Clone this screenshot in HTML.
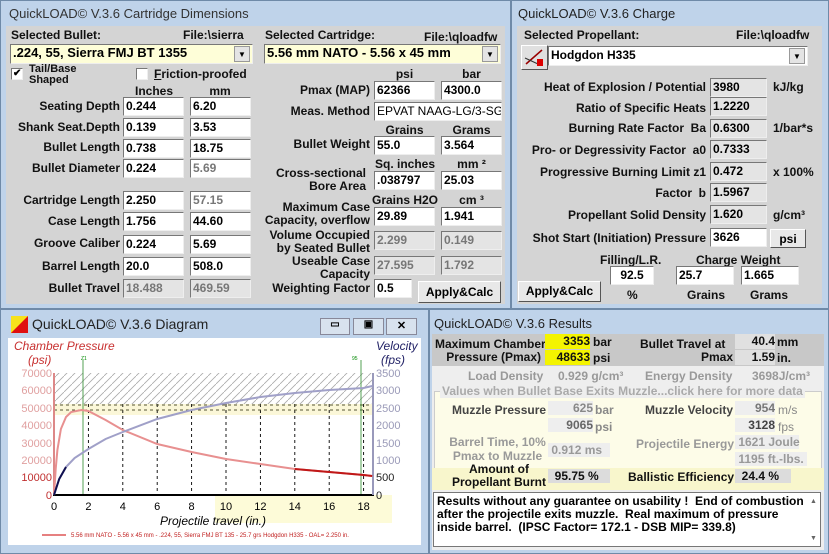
<!DOCTYPE html>
<html><head><meta charset="utf-8">
<style>
*{margin:0;padding:0;box-sizing:border-box}
body{width:829px;height:554px;background:#8a8a8a;position:relative;overflow:hidden;font-family:"Liberation Sans",Arial,sans-serif}
.w{position:absolute;background:#bfd3ea;border:1px solid #6f8aa8}
.tt{position:absolute;font:13px "Liberation Sans",sans-serif;color:#222}
.b{position:absolute;background:#d4d4d4}
.t{position:absolute;font:bold 12px "Liberation Sans",sans-serif;color:#111;white-space:nowrap;line-height:14px}
.r{text-align:right}
.c{text-align:center}
.i{position:absolute;background:#fff;border:1px solid #777;border-right-color:#eee;border-bottom-color:#eee;font:bold 12px "Liberation Sans",sans-serif;padding:1px 2px;line-height:14px;white-space:nowrap;overflow:hidden}
.g{background:#e4e4e4}
.gt{color:#777}
.btn{position:absolute;background:#e8e8e8;border:1px solid #fff;border-right-color:#555;border-bottom-color:#555;font:bold 12px "Liberation Sans",sans-serif;text-align:center}
.dd{position:absolute;width:16px;height:16px;background:#e4e4e4;border:1px solid #999;font-size:8px;text-align:center;line-height:15px}
</style></head><body>

<!-- Window 1 -->
<div class="w" style="left:0;top:0;width:511px;height:309px"></div>
<div class="tt" style="left:9px;top:6px;color:#333">QuickLOAD© V.3.6 Cartridge Dimensions</div>
<div class="b" style="left:6px;top:26px;width:499px;height:278px"></div>
<div class="t" style="left:11px;top:28px">Selected Bullet:</div>
<div class="t" style="left:183px;top:28px">File:\sierra</div>
<div class="i" style="left:10px;top:44px;width:243px;height:20px;background:#fefed8;font-size:13px">.224, 55, Sierra FMJ BT 1355</div>
<div class="dd" style="left:234px;top:46px">▼</div>
<div class="t" style="left:265px;top:28px">Selected Cartridge:</div>
<div class="t" style="left:424px;top:30px">File:\qloadfw</div>
<div class="i" style="left:264px;top:44px;width:237px;height:20px;background:#fefed8;font-size:13px">5.56 mm NATO - 5.56 x 45 mm</div>
<div class="dd" style="left:482px;top:46px">▼</div>
<div class="i" style="left:11px;top:68px;width:12px;height:12px;font-size:10px;line-height:9px;padding:0 1px">✔</div>
<div class="t" style="left:29px;top:64px;font-size:11px;line-height:11px;height:22px;overflow:hidden">Tail/Base<br>Shaped</div>
<div class="i" style="left:136px;top:68px;width:12px;height:12px"></div>
<div class="t" style="left:154px;top:67px"><u>F</u>riction-proofed</div>
<div class="t c" style="left:124px;top:84px;width:60px">Inches</div>
<div class="t c" style="left:190px;top:84px;width:60px">mm</div>

<div class="t r" style="left:0;top:99px;width:120px">Seating Depth</div>
<div class="i" style="left:123px;top:97px;width:61px;height:19px">0.244</div>
<div class="i" style="left:190px;top:97px;width:61px;height:19px">6.20</div>
<div class="t r" style="left:0;top:120px;width:120px">Shank Seat.Depth</div>
<div class="i" style="left:123px;top:118px;width:61px;height:19px">0.139</div>
<div class="i" style="left:190px;top:118px;width:61px;height:19px">3.53</div>
<div class="t r" style="left:0;top:140px;width:120px">Bullet Length</div>
<div class="i" style="left:123px;top:139px;width:61px;height:19px">0.738</div>
<div class="i" style="left:190px;top:139px;width:61px;height:19px">18.75</div>
<div class="t r" style="left:0;top:161px;width:120px">Bullet Diameter</div>
<div class="i" style="left:123px;top:159px;width:61px;height:19px">0.224</div>
<div class="i gt" style="left:190px;top:159px;width:61px;height:19px">5.69</div>
<div class="t r" style="left:0;top:193px;width:120px">Cartridge Length</div>
<div class="i" style="left:123px;top:191px;width:61px;height:19px">2.250</div>
<div class="i gt" style="left:190px;top:191px;width:61px;height:19px">57.15</div>
<div class="t r" style="left:0;top:214px;width:120px">Case Length</div>
<div class="i" style="left:123px;top:212px;width:61px;height:19px">1.756</div>
<div class="i" style="left:190px;top:212px;width:61px;height:19px">44.60</div>
<div class="t r" style="left:0;top:236px;width:120px">Groove Caliber</div>
<div class="i" style="left:123px;top:235px;width:61px;height:19px">0.224</div>
<div class="i" style="left:190px;top:235px;width:61px;height:19px">5.69</div>
<div class="t r" style="left:0;top:259px;width:120px">Barrel Length</div>
<div class="i" style="left:123px;top:257px;width:61px;height:19px">20.0</div>
<div class="i" style="left:190px;top:257px;width:61px;height:19px">508.0</div>
<div class="t r" style="left:0;top:281px;width:120px">Bullet Travel</div>
<div class="i g gt" style="left:123px;top:279px;width:61px;height:19px">18.488</div>
<div class="i g gt" style="left:190px;top:279px;width:61px;height:19px">469.59</div>

<div class="t c" style="left:374px;top:67px;width:61px">psi</div>
<div class="t c" style="left:441px;top:67px;width:61px">bar</div>
<div class="t r" style="left:250px;top:83px;width:120px">Pmax (MAP)</div>
<div class="i" style="left:374px;top:81px;width:61px;height:19px">62366</div>
<div class="i" style="left:441px;top:81px;width:61px;height:19px">4300.0</div>
<div class="t r" style="left:250px;top:104px;width:120px">Meas. Method</div>
<div class="i" style="left:374px;top:102px;width:128px;height:19px;font-weight:normal">EPVAT NAAG-LG/3-SG/1</div>
<div class="t c" style="left:374px;top:123px;width:61px">Grains</div>
<div class="t c" style="left:441px;top:123px;width:61px">Grams</div>
<div class="t r" style="left:250px;top:137px;width:120px">Bullet Weight</div>
<div class="i" style="left:374px;top:136px;width:61px;height:19px">55.0</div>
<div class="i" style="left:441px;top:136px;width:61px;height:19px">3.564</div>
<div class="t c" style="left:370px;top:157px;width:70px">Sq. inches</div>
<div class="t c" style="left:441px;top:157px;width:61px">mm ²</div>
<div class="t r" style="left:250px;top:167px;width:116px;line-height:13px">Cross-sectional<br>Bore Area</div>
<div class="i" style="left:374px;top:171px;width:61px;height:19px">.038797</div>
<div class="i" style="left:441px;top:171px;width:61px;height:19px">25.03</div>
<div class="t c" style="left:370px;top:193px;width:70px">Grains H2O</div>
<div class="t c" style="left:441px;top:193px;width:61px">cm ³</div>
<div class="t r" style="left:250px;top:201px;width:120px;line-height:13px">Maximum Case<br>Capacity, overflow</div>
<div class="i" style="left:374px;top:207px;width:61px;height:19px">29.89</div>
<div class="i" style="left:441px;top:207px;width:61px;height:19px">1.941</div>
<div class="t r" style="left:250px;top:229px;width:120px;line-height:13px">Volume Occupied<br>by Seated Bullet</div>
<div class="i g gt" style="left:374px;top:231px;width:61px;height:19px">2.299</div>
<div class="i g gt" style="left:441px;top:231px;width:61px;height:19px">0.149</div>
<div class="t r" style="left:250px;top:255px;width:120px;line-height:13px">Useable Case<br>Capacity</div>
<div class="i g gt" style="left:374px;top:256px;width:61px;height:19px">27.595</div>
<div class="i g gt" style="left:441px;top:256px;width:61px;height:19px">1.792</div>
<div class="t r" style="left:250px;top:281px;width:120px">Weighting Factor</div>
<div class="i" style="left:374px;top:279px;width:38px;height:19px">0.5</div>
<div class="btn" style="left:418px;top:281px;width:83px;height:22px;line-height:20px">Apply&amp;Calc</div>

<!-- Window 2 -->
<div class="w" style="left:511px;top:0;width:318px;height:309px"></div>
<div class="tt" style="left:518px;top:6px">QuickLOAD© V.3.6 Charge</div>
<div class="b" style="left:517px;top:26px;width:305px;height:278px"></div>
<div class="t" style="left:524px;top:28px">Selected Propellant:</div>
<div class="t" style="left:736px;top:28px">File:\qloadfw</div>
<div class="btn" style="left:521px;top:45px;width:27px;height:25px;background:#e0e0e0"><svg width="25" height="23"><path d="M4 18 L20 4" stroke="#900" stroke-width="1.5"/><path d="M3 12 L16 18" stroke="#333"/><rect x="15" y="13" width="6" height="7" fill="#d00"/></svg></div>
<div class="i" style="left:548px;top:46px;width:260px;height:20px">Hodgdon H335</div>
<div class="dd" style="left:789px;top:48px">▼</div>
<div class="t r" style="left:520px;top:80px;width:186px">Heat of Explosion / Potential</div>
<div class="i g" style="left:710px;top:78px;width:57px;height:19px">3980</div>
<div class="t" style="left:773px;top:80px">kJ/kg</div>
<div class="t r" style="left:520px;top:101px;width:186px">Ratio of Specific Heats</div>
<div class="i g" style="left:710px;top:97px;width:57px;height:19px">1.2220</div>
<div class="t r" style="left:520px;top:121px;width:186px">Burning Rate Factor&nbsp; Ba</div>
<div class="i g" style="left:710px;top:119px;width:57px;height:19px">0.6300</div>
<div class="t" style="left:773px;top:121px">1/bar*s</div>
<div class="t r" style="left:520px;top:143px;width:186px">Pro- or Degressivity Factor&nbsp; a0</div>
<div class="i g" style="left:710px;top:140px;width:57px;height:19px">0.7333</div>
<div class="t r" style="left:520px;top:165px;width:186px">Progressive Burning Limit z1</div>
<div class="i g" style="left:710px;top:162px;width:57px;height:19px">0.472</div>
<div class="t" style="left:773px;top:165px">x 100%</div>
<div class="t r" style="left:520px;top:186px;width:186px">Factor&nbsp; b</div>
<div class="i g" style="left:710px;top:183px;width:57px;height:19px">1.5967</div>
<div class="t r" style="left:520px;top:208px;width:186px">Propellant Solid Density</div>
<div class="i g" style="left:710px;top:205px;width:57px;height:19px">1.620</div>
<div class="t" style="left:773px;top:208px">g/cm³</div>
<div class="t r" style="left:520px;top:231px;width:186px">Shot Start (Initiation) Pressure</div>
<div class="i" style="left:710px;top:228px;width:57px;height:19px">3626</div>
<div class="btn" style="left:770px;top:229px;width:36px;height:19px;line-height:18px">psi</div>
<div class="t" style="left:600px;top:253px">Filling/L.R.</div>
<div class="t" style="left:696px;top:253px">Charge Weight</div>
<div class="i c" style="left:610px;top:266px;width:44px;height:19px">92.5</div>
<div class="i" style="left:676px;top:266px;width:58px;height:19px">25.7</div>
<div class="i" style="left:741px;top:266px;width:58px;height:19px">1.665</div>
<div class="btn" style="left:518px;top:281px;width:83px;height:21px;line-height:19px">Apply&amp;Calc</div>
<div class="t" style="left:627px;top:288px">%</div>
<div class="t" style="left:687px;top:288px">Grains</div>
<div class="t" style="left:750px;top:288px">Grams</div>

<!-- Window 3 Diagram -->
<div class="w" style="left:0;top:309px;width:429px;height:245px"></div>
<svg style="position:absolute;left:11px;top:316px" width="17" height="17"><rect width="17" height="17" fill="#f7e21c"/><polygon points="0,17 17,0 17,17" fill="#e01010"/></svg>
<div class="tt" style="left:32px;top:316px;font-size:14px">QuickLOAD© V.3.6 Diagram</div>
<div class="btn" style="left:320px;top:318px;width:30px;height:17px;background:#d8e2ee;border-color:#889;font-size:10px">▭</div>
<div class="btn" style="left:353px;top:318px;width:31px;height:17px;background:#d8e2ee;border-color:#889;font-size:10px">▣</div>
<div class="btn" style="left:386px;top:318px;width:31px;height:17px;background:#d8e2ee;border-color:#889;font-size:11px">✕</div>
<svg style="position:absolute;left:8px;top:338px" width="413" height="207">
<g transform="translate(-8,-338)" font-family="Liberation Sans,sans-serif">
<rect x="8" y="338" width="413" height="207" fill="#fff"/>
<rect x="215" y="495" width="177" height="28" fill="#fdfbd8"/>
<rect x="54" y="404" width="319" height="11" fill="#fbf7d8"/>
<defs><pattern id="h" width="8" height="8" patternUnits="userSpaceOnUse"><path d="M0 8 L8 0" stroke="#aaa" stroke-width="0.8"/></pattern></defs>
<rect x="54" y="373" width="319" height="31" fill="url(#h)"/>
<g stroke="#000" stroke-dasharray="3,3" stroke-width="0.9">
<path d="M88.4 404V495M122.8 404V495M157.2 404V495M191.6 404V495M226 404V495M260.4 404V495M294.8 404V495M329.2 404V495M363.6 404V495"/>
<path d="M54 405H373M54 410H373" stroke="#553"/>
</g>
<path d="M83 360V495M361 360V495" stroke="#2a8a2a" stroke-width="0.8"/>
<path d="M54 373V495H373V373" stroke="#000" stroke-width="2" fill="none"/>
<path d="M54 373V495" stroke="#d88" stroke-width="2"/>
<path d="M373 373V495" stroke="#99b" stroke-width="2"/>
<polyline fill="none" stroke="#e89090" stroke-width="2" points="54,495 55.7,469 57.4,450 60.9,429 66,417 71.2,412 81.3,410 88.4,411 105.6,420 122.8,430 157.2,444 191.6,452 226,459 260.4,464 294.8,469 329.2,472 363.6,475 372.2,476"/>
<polyline fill="none" stroke="#c01818" stroke-width="2" points="294.8,469 329.2,472 363.6,475 372.2,476"/>
<polyline fill="none" stroke="#a0a0c8" stroke-width="2" points="54,495 59.2,479 66,467 74.6,458 88.4,449 105.6,439 122.8,432 157.2,419 191.6,410 226,403 260.4,397 294.8,393 329.2,390 363.6,388 372.2,386"/>
<polyline fill="none" stroke="#101050" stroke-width="2" points="54,495 59.2,479 66,467"/>
<text x="14" y="350" font-size="12" font-style="italic" fill="#c83030">Chamber Pressure</text>
<text x="28" y="364" font-size="12" font-style="italic" fill="#c83030">(psi)</text>
<text x="376" y="350" font-size="12" font-style="italic" fill="#222266">Velocity</text>
<text x="381" y="364" font-size="12" font-style="italic" fill="#222266">(fps)</text>
<text x="81" y="360" font-size="5" fill="#080">Z1</text><text x="352" y="360" font-size="5" fill="#080">95</text>
<g font-size="11" fill="#e0a0a0" text-anchor="end">
<text x="52" y="377">70000</text><text x="52" y="394">60000</text><text x="52" y="412">50000</text><text x="52" y="429">40000</text><text x="52" y="447">30000</text><text x="52" y="464">20000</text><text x="52" y="481" fill="#c03030">10000</text><text x="52" y="499" fill="#c03030">0</text></g>
<g font-size="11" fill="#9a9ab8"><text x="376" y="377">3500</text><text x="376" y="394">3000</text><text x="376" y="412">2500</text><text x="376" y="429">2000</text><text x="376" y="447">1500</text><text x="376" y="464">1000</text><text x="376" y="481" fill="#222">500</text><text x="376" y="499" fill="#222">0</text></g>
<g font-size="11" fill="#000" text-anchor="middle"><text x="54" y="510">0</text><text x="88.4" y="510">2</text><text x="122.8" y="510">4</text><text x="157.2" y="510">6</text><text x="191.6" y="510">8</text><text x="226" y="510">10</text><text x="260.4" y="510">12</text><text x="294.8" y="510">14</text><text x="329.2" y="510">16</text><text x="363.6" y="510">18</text></g>
<text x="213" y="525" font-size="12" font-style="italic" text-anchor="middle" fill="#000">Projectile travel (in.)</text>
<path d="M42 535H66" stroke="#c00"/>
<text x="71" y="537" font-size="6" fill="#c02020">5.56 mm NATO - 5.56 x 45 mm - .224, 55, Sierra FMJ BT 135 - 25.7 grs Hodgdon H335 - OAL= 2.250 in.</text>
</g></svg>

<!-- Window 4 Results -->
<div class="w" style="left:429px;top:309px;width:400px;height:245px"></div>
<div class="tt" style="left:434px;top:316px">QuickLOAD© V.3.6 Results</div>
<div class="b" style="left:432px;top:334px;width:392px;height:216px;background:#eeeeee"></div>
<div class="b" style="left:432px;top:334px;width:392px;height:32px;background:#c8c8c8"></div>
<div class="t" style="left:435px;top:337px">Maximum Chamber</div>
<div class="t r" style="left:432px;top:350px;width:109px">Pressure (Pmax)</div>
<div class="t r" style="left:545px;top:334px;width:45px;height:15px;background:#f4f400">3353</div>
<div class="t" style="left:593px;top:335px">bar</div>
<div class="t r" style="left:545px;top:350px;width:45px;height:15px;background:#f4f400">48633</div>
<div class="t" style="left:593px;top:351px">psi</div>
<div class="t" style="left:640px;top:337px">Bullet Travel at</div>
<div class="t" style="left:701px;top:350px">Pmax</div>
<div class="t r" style="left:735px;top:334px;width:40px;height:15px;background:#e0e0e0">40.4</div>
<div class="t" style="left:777px;top:335px">mm</div>
<div class="t r" style="left:735px;top:350px;width:40px;height:15px;background:#e0e0e0">1.59</div>
<div class="t" style="left:777px;top:351px">in.</div>
<div class="t gt" style="left:468px;top:369px;color:#999">Load Density</div>
<div class="t gt" style="left:558px;top:369px;color:#999">0.929 g/cm³</div>
<div class="t gt" style="left:645px;top:369px;color:#999">Energy Density</div>
<div class="t gt" style="left:752px;top:369px;color:#999">3698J/cm³</div>
<div style="position:absolute;left:434px;top:391px;width:388px;height:96px;border:1px solid #ccc;background:#fdfce8"></div>
<div class="t" style="left:440px;top:384px;color:#aaa;background:#eee;padding:0 2px">Values when Bullet Base Exits Muzzle...click here for more data</div>
<div class="t" style="left:452px;top:403px;color:#444">Muzzle Pressure</div>
<div class="t r" style="left:548px;top:401px;width:45px;color:#888;background:#eeeeee">625</div>
<div class="t" style="left:595px;top:403px;color:#888">bar</div>
<div class="t r" style="left:548px;top:418px;width:45px;color:#666;background:#eeeeee">9065</div>
<div class="t" style="left:595px;top:420px;color:#888">psi</div>
<div class="t" style="left:645px;top:403px;color:#444">Muzzle Velocity</div>
<div class="t r" style="left:735px;top:401px;width:40px;color:#777;background:#eeeeee">954</div>
<div class="t" style="left:778px;top:403px;color:#888;font-weight:normal">m/s</div>
<div class="t r" style="left:735px;top:418px;width:40px;color:#444;background:#eeeeee">3128</div>
<div class="t" style="left:778px;top:420px;color:#888;font-weight:normal">fps</div>
<div class="t c" style="left:440px;top:435px;width:115px;color:#999">Barrel Time, 10%<br>Pmax to Muzzle</div>
<div class="t" style="left:548px;top:443px;width:62px;color:#999;background:#eeeeee">&nbsp;0.912 ms</div>
<div class="t" style="left:636px;top:437px;color:#999">Projectile Energy</div>
<div class="t" style="left:735px;top:435px;width:64px;color:#999;background:#eeeeee">&nbsp;1621 Joule</div>
<div class="t" style="left:735px;top:452px;width:72px;color:#999;background:#eeeeee">&nbsp;1195 ft.-lbs.</div>
<div class="b" style="left:432px;top:468px;width:392px;height:22px;background:#f8f6cc"></div>
<div class="t c" style="left:444px;top:463px;width:110px;line-height:13px">Amount of<br>Propellant Burnt</div>
<div class="t" style="left:548px;top:469px;width:62px;background:#dcdcdc">&nbsp;&nbsp;95.75 %</div>
<div class="t" style="left:628px;top:470px">Ballistic Efficiency</div>
<div class="t" style="left:735px;top:469px;width:56px;background:#dcdcdc">&nbsp;&nbsp;24.4 %</div>
<div class="i" style="left:433px;top:492px;width:388px;height:55px;font-size:12px;line-height:13px;padding:2px 16px 0 3px;white-space:normal;border-color:#777">Results without any guarantee on usability !&nbsp; End of combustion after the projectile exits muzzle.&nbsp; Real maximum of pressure inside barrel.&nbsp; (IPSC Factor= 172.1 - DSB MIP= 339.8)</div>
<div style="position:absolute;left:810px;top:498px;font-size:7px;color:#666">▲</div>
<div style="position:absolute;left:810px;top:535px;font-size:7px;color:#666">▼</div>
</body></html>
